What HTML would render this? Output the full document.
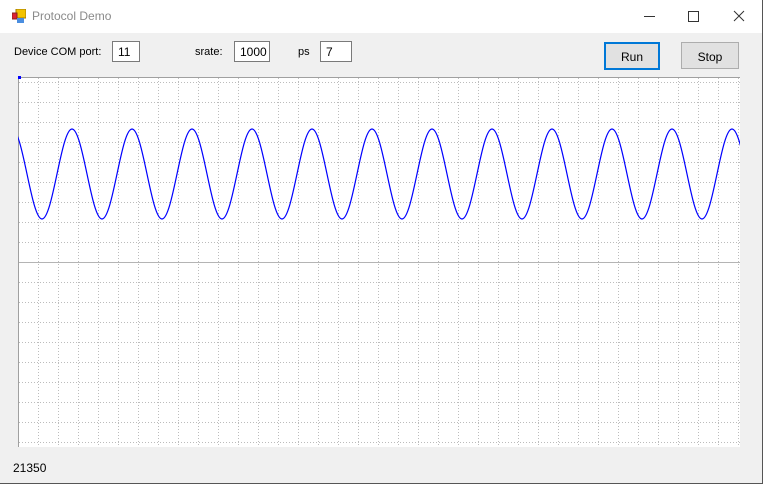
<!DOCTYPE html><html><head><style>
body{margin:0;width:763px;height:484px;overflow:hidden;background:#f0f0f0;font-family:"Liberation Sans",sans-serif;font-size:11px;position:relative}
.a{position:absolute}
.tb{background:#fff;border:1px solid #7a7a7a;box-sizing:border-box;height:21px;padding:3px 0 0 5px;font-size:12px}
.btn{box-sizing:border-box;background:#e1e1e1;text-align:center;font-size:12px}
</style></head><body>
<div class="a" style="left:0;top:0;width:763px;height:33px;background:#fff"></div>
<div class="a" style="left:762px;top:0;width:1px;height:484px;background:#555"></div>
<div class="a" style="left:0;top:483px;width:763px;height:1px;background:#555"></div>
<svg class="a" style="left:12px;top:9px" width="14" height="14"><rect x="4" y="0" width="10" height="9" fill="#f2c200" stroke="#a07a00"/><rect x="0" y="4" width="5" height="6" fill="#d23" stroke="#822"/><rect x="5" y="9" width="7" height="5" fill="#4a8ee0"/></svg>
<div class="a" style="left:32px;top:9px;font-size:12px;color:#8a8a8a">Protocol Demo</div>
<div class="a" style="left:644px;top:16px;width:11px;height:1px;background:#333"></div>
<div class="a" style="left:688px;top:11px;width:9px;height:9px;border:1px solid #333"></div>
<svg class="a" style="left:733px;top:10px" width="12" height="12"><path d="M1 1L11 11M11 1L1 11" stroke="#333" stroke-width="1"/></svg>
<div class="a" style="left:14px;top:46px">Device COM port:</div>
<div class="a tb" style="left:112px;top:41px;width:28px">11</div>
<div class="a" style="left:195px;top:46px">srate:</div>
<div class="a tb" style="left:234px;top:41px;width:36px">1000</div>
<div class="a" style="left:298px;top:46px">ps</div>
<div class="a tb" style="left:320px;top:41px;width:32px">7</div>
<div class="a btn" style="left:604px;top:42px;width:56px;height:28px;border:2px solid #0078d7;padding-top:6px">Run</div>
<div class="a btn" style="left:681px;top:42px;width:58px;height:27px;border:1px solid #adadad;padding-top:7px">Stop</div>
<svg class="a" style="left:0;top:0" width="763" height="484">
<defs><clipPath id="c"><rect x="18" y="77" width="722" height="370"/></clipPath></defs>
<rect x="18" y="77" width="722" height="370" fill="#fff"/>
<g stroke="#bcbcbc" stroke-width="1" stroke-dasharray="1,2" shape-rendering="crispEdges">
<path d="M38.5 78V447M58.5 78V447M78.5 78V447M98.5 78V447M118.5 78V447M138.5 78V447M158.5 78V447M178.5 78V447M198.5 78V447M218.5 78V447M238.5 78V447M258.5 78V447M278.5 78V447M298.5 78V447M318.5 78V447M338.5 78V447M358.5 78V447M378.5 78V447M398.5 78V447M418.5 78V447M438.5 78V447M458.5 78V447M478.5 78V447M498.5 78V447M518.5 78V447M538.5 78V447M558.5 78V447M578.5 78V447M598.5 78V447M618.5 78V447M638.5 78V447M658.5 78V447M678.5 78V447M698.5 78V447M718.5 78V447M738.5 78V447"/>
<path d="M19 82.5H740M19 102.5H740M19 122.5H740M19 142.5H740M19 162.5H740M19 182.5H740M19 202.5H740M19 222.5H740M19 242.5H740M19 282.5H740M19 302.5H740M19 322.5H740M19 342.5H740M19 362.5H740M19 382.5H740M19 402.5H740M19 422.5H740M19 442.5H740"/>
</g>
<path d="M18 262.5H740" stroke="#b4b4b4" shape-rendering="crispEdges"/>
<path d="M18.5 77V447M18 77.5H740" stroke="#a0a0a0" shape-rendering="crispEdges"/>
<rect x="18" y="76" width="3" height="3" fill="#00f"/>
<path clip-path="url(#c)" fill="none" stroke="#00f" stroke-width="1.2" d="M12,129 C22.93,129 31.07,219 42,219 S61.07,129 72,129 S91.07,219 102,219 S121.07,129 132,129 S151.07,219 162,219 S181.07,129 192,129 S211.07,219 222,219 S241.07,129 252,129 S271.07,219 282,219 S301.07,129 312,129 S331.07,219 342,219 S361.07,129 372,129 S391.07,219 402,219 S421.07,129 432,129 S451.07,219 462,219 S481.07,129 492,129 S511.07,219 522,219 S541.07,129 552,129 S571.07,219 582,219 S601.07,129 612,129 S631.07,219 642,219 S661.07,129 672,129 S691.07,219 702,219 S721.07,129 732,129 S751.07,219 762,219"/>
</svg>
<div class="a" style="left:13px;top:461px;font-size:12px">21350</div>
</body></html>
